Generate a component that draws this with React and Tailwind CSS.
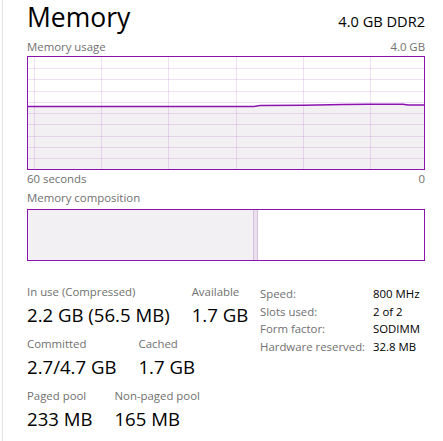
import React from "react";

const font = { fontFamily: '"Segoe UI", "Open Sans", "Noto Sans", sans-serif' };

function UsageGraph() {
  const vLines = [6, 73, 140, 208, 275, 342];
  const hLines = [11, 22, 34, 45, 56, 67, 79, 90, 101];
  // data line (inner coords, 396 x 112)
  const pts = "0,49.6 226,49.6 232,48.6 276,48.2 315,47.4 340,47.2 375,47.2 380,48 396,48";
  return (
    <div className="h-[114px] w-[398px] border border-[#8b12ae] bg-white">
      <svg width="396" height="112" viewBox="0 0 396 112" className="block">
        <polygon points={`${pts} 396,112 0,112`} fill="#f3f0f4" />
        {vLines.map((x) => (
          <line key={"v" + x} x1={x + 0.5} y1="0" x2={x + 0.5} y2="112" stroke="#8b12ae" strokeOpacity="0.13" strokeWidth="1" />
        ))}
        {hLines.map((y) => (
          <line key={"h" + y} x1="0" y1={y + 0.5} x2="396" y2={y + 0.5} stroke="#8b12ae" strokeOpacity="0.13" strokeWidth="1" />
        ))}
        <polyline points={pts} fill="none" stroke="#8b12ae" strokeWidth="1.5" />
      </svg>
    </div>
  );
}

function Stat({ label, value }) {
  return (
    <div className="flex flex-col">
      <span className="text-[11.4px] leading-[16px] text-[#707070]">{label}</span>
      <span className="text-[18.6px] leading-[26px] pt-[2px] text-black">{value}</span>
    </div>
  );
}

export default function App() {
  const specs = [
    ["Speed:", "800 MHz"],
    ["Slots used:", "2 of 2"],
    ["Form factor:", "SODIMM"],
    ["Hardware reserved:", "32.8 MB"],
  ];
  return (
    <div className="w-[443px] h-[441px] bg-white overflow-hidden pl-[2px]" style={font}>
      <div className="h-full border-l border-[#e3e3e3] pl-[24px] w-[416px]">
        <div className="w-[398px]">
          <div className="flex items-baseline justify-between h-[38px]">
            <span className="text-[26.5px] leading-[34px] text-black">Memory</span>
            <span className="text-[14.6px] text-black">4.0 GB DDR2</span>
          </div>
          <div className="flex justify-between text-[11.4px] leading-[16px] text-[#707070] mt-[1px] mb-[1px]">
            <span>Memory usage</span>
            <span>4.0 GB</span>
          </div>
          <UsageGraph />
          <div className="flex justify-between text-[11.4px] leading-[16px] text-[#707070] mt-[1px]">
            <span>60 seconds</span>
            <span>0</span>
          </div>
          <div className="text-[11.4px] leading-[16px] text-[#707070] mt-[3px] mb-[3px]">Memory composition</div>
          <div className="flex h-[52px] w-[398px] border border-[#8b12ae] bg-white">
            <div className="w-[225px] h-full bg-[#f3f0f4]" />
            <div className="w-[5px] h-full bg-[#ebe1ee] border-x border-[#d6bfdf]" />
          </div>
          <div className="flex items-start mt-[23px]">
            <div className="flex flex-col gap-[8px] w-[233px]">
              <div className="flex gap-[22px]">
                <Stat label="In use (Compressed)" value="2.2 GB (56.5 MB)" />
                <Stat label="Available" value="1.7 GB" />
              </div>
              <div className="flex gap-[22px]">
                <Stat label="Committed" value="2.7/4.7 GB" />
                <Stat label="Cached" value="1.7 GB" />
              </div>
              <div className="flex gap-[22px]">
                <Stat label="Paged pool" value="233 MB" />
                <Stat label="Non-paged pool" value="165 MB" />
              </div>
            </div>
            <div className="grid grid-cols-[113px_1fr] items-start text-[11.4px] leading-[17.6px] pt-[1px]">
              {specs.map(([k, v]) => (
                <React.Fragment key={k}>
                  <span className="text-[#707070]">{k}</span>
                  <span className="text-black">{v}</span>
                </React.Fragment>
              ))}
            </div>
          </div>
        </div>
      </div>
    </div>
  );
}
